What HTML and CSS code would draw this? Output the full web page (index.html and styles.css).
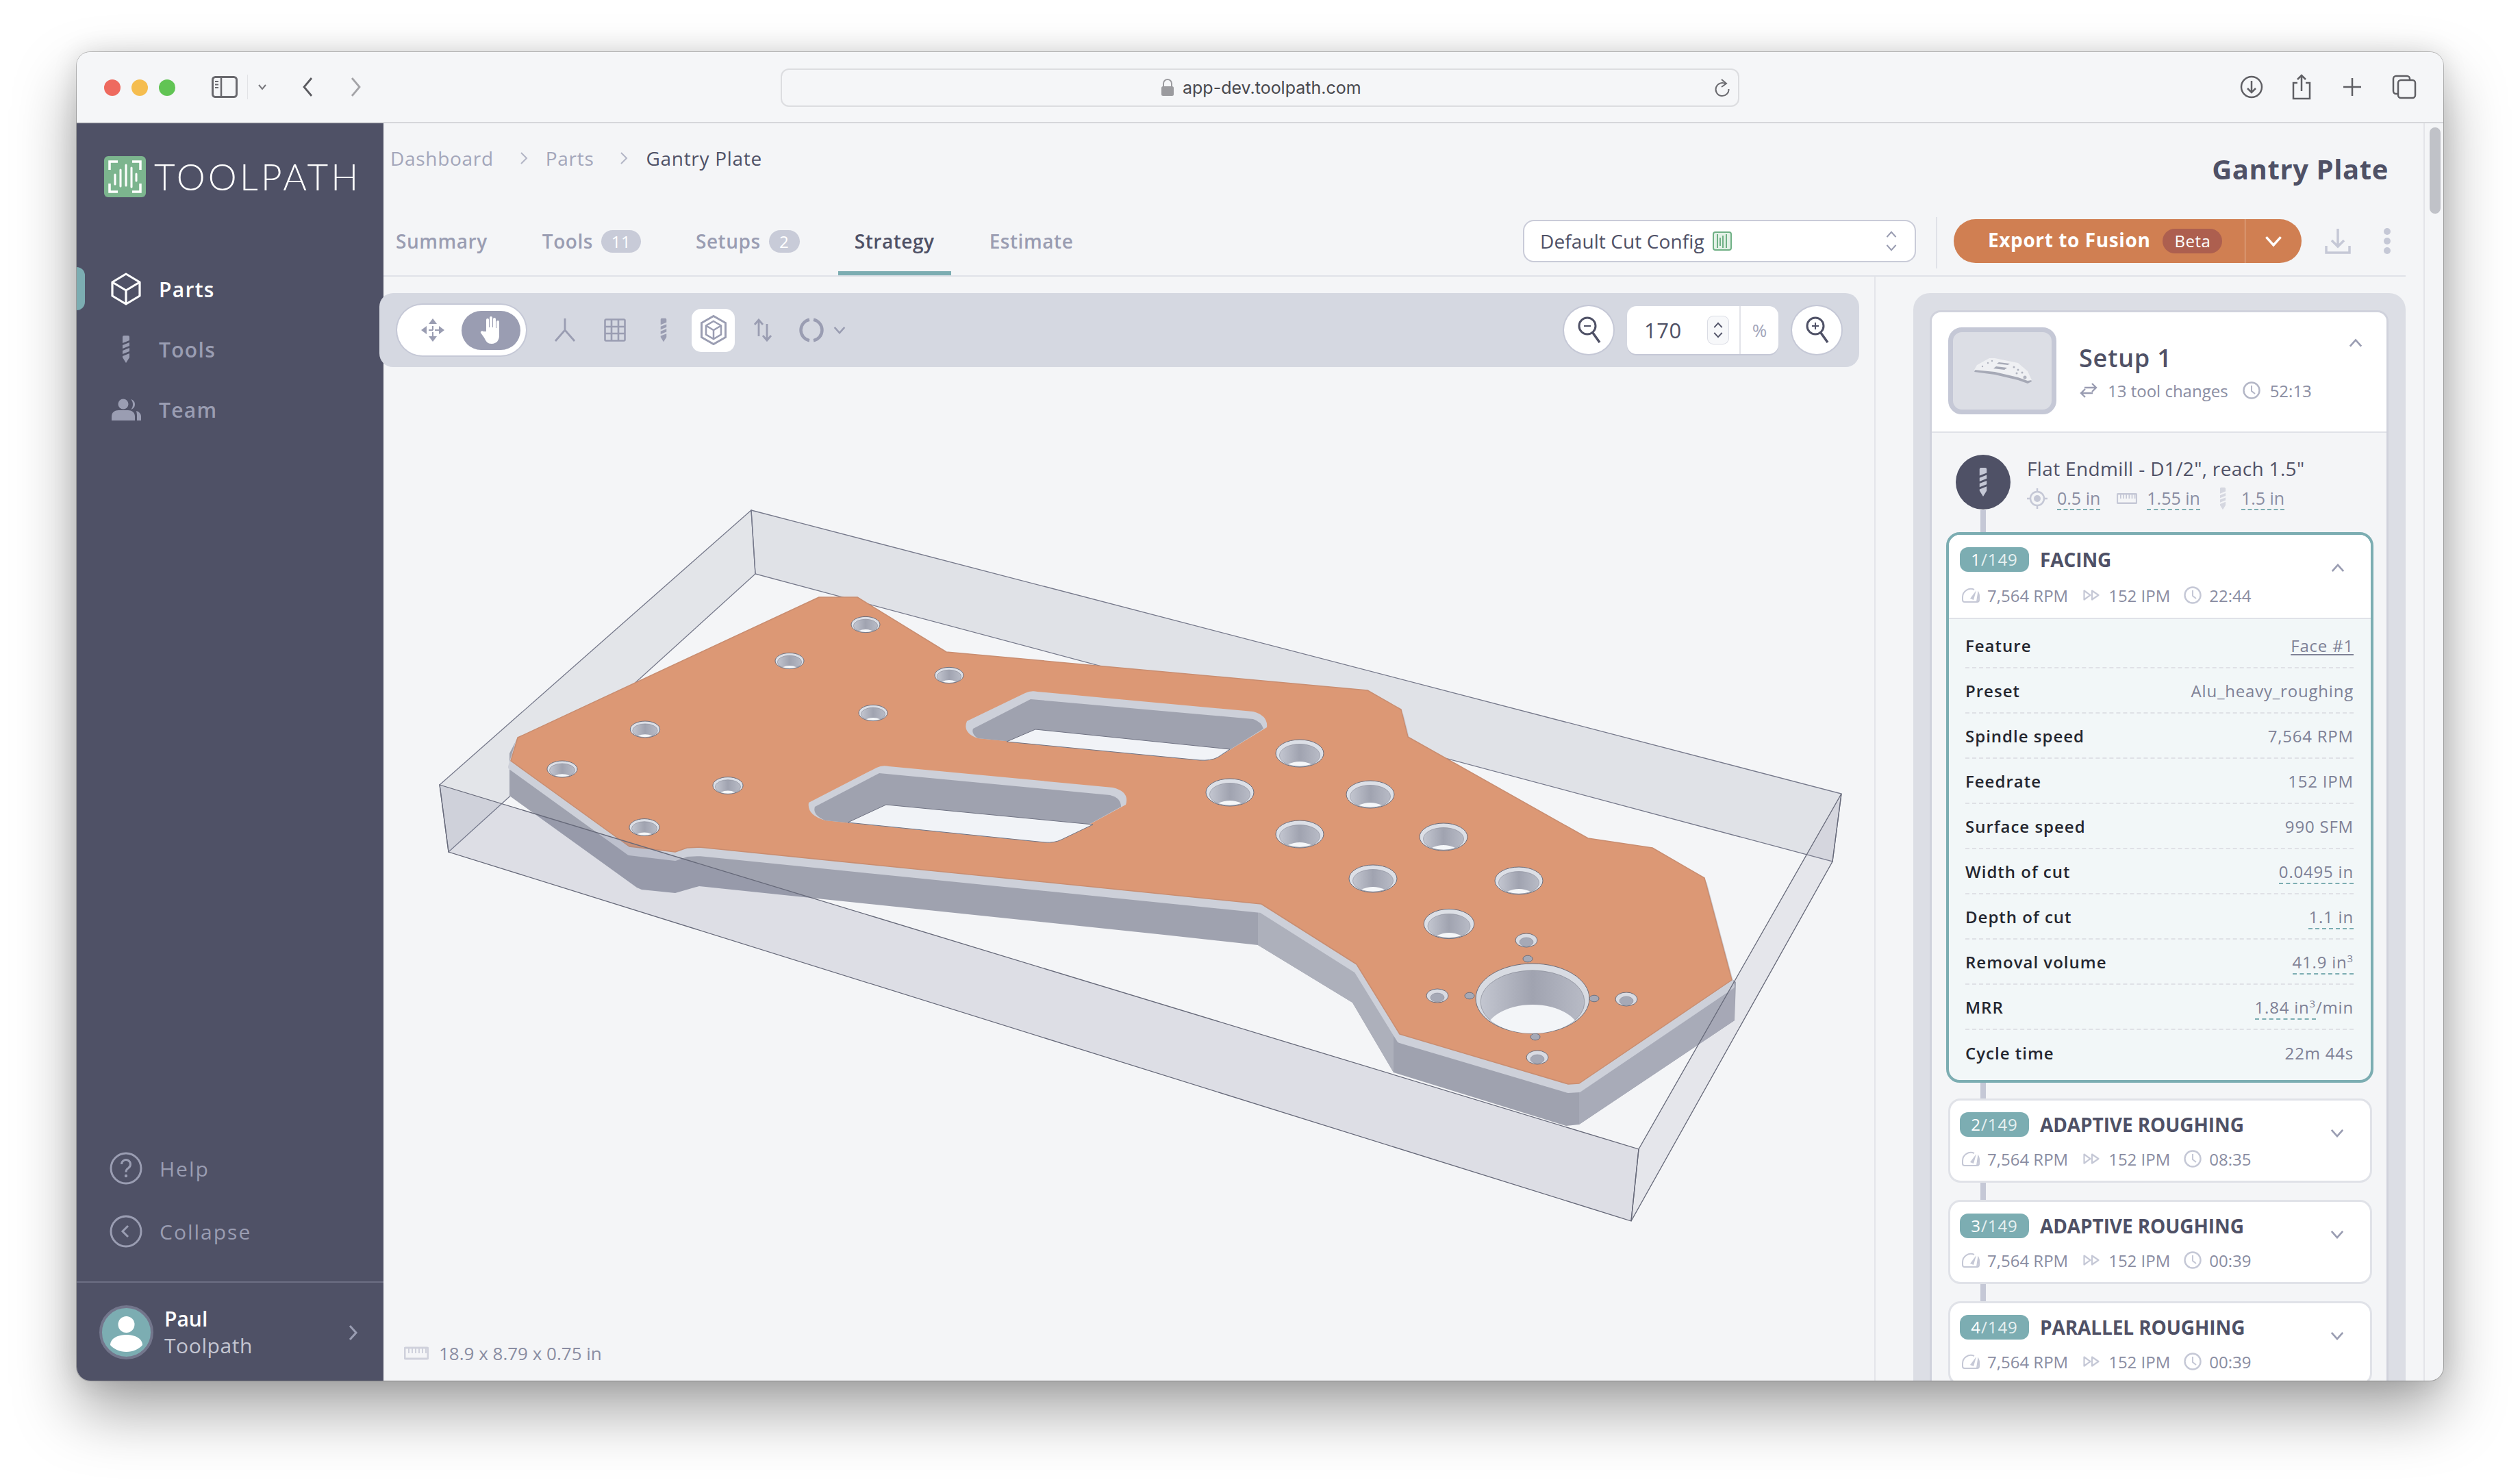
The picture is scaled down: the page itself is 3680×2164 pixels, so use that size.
FILE: index.html
```html
<!DOCTYPE html>
<html lang="en">
<head>
<meta charset="utf-8">
<title>Toolpath - Gantry Plate</title>
<link rel="stylesheet" href="styles.css">
</head>
<body>
<svg class="defs" width="0" height="0" aria-hidden="true">
  <defs>
    <symbol id="i-endmill" viewBox="0 0 12 42">
      <path d="M1 3a2 2 0 0 1 2-2h6a2 2 0 0 1 2 2v5L1 12zM1 15l10-4v5L1 20zM1 23l10-4v5L1 28zM1 31l10-4v6l-5 8-5-8z" fill="currentColor"/>
    </symbol>
    <symbol id="i-gauge" viewBox="0 0 26 24">
      <path d="M4 22a3 3 0 0 1-3-3v-4A12 12 0 0 1 18 4M24 9a12 12 0 0 1 1 6v4a3 3 0 0 1-3 3zM4 22h18" fill="none" stroke="currentColor" stroke-width="2"/>
      <path d="M12 17l9-12-4 14z" fill="currentColor"/>
    </symbol>
    <symbol id="i-ff" viewBox="0 0 24 16">
      <path d="M1.5 1.5l9 6.5-9 6.5zM13 1.5l9.500 6.500-9.500 6.500z" fill="none" stroke="currentColor" stroke-width="2.200" stroke-linejoin="round"/>
    </symbol>
    <symbol id="i-clock" viewBox="0 0 26 26">
      <circle cx="13" cy="13" r="11.500" fill="none" stroke="currentColor" stroke-width="2.400"/>
      <path d="M13 6v8l5 4" fill="none" stroke="currentColor" stroke-width="2"/>
    </symbol>
    <symbol id="i-down" viewBox="0 0 22 14">
      <path d="M2 2l9 10 9-10" fill="none" stroke="currentColor" stroke-width="3"/>
    </symbol>
    <symbol id="i-up" viewBox="0 0 22 14">
      <path d="M2 12l9-10 9 10" fill="none" stroke="currentColor" stroke-width="3"/>
    </symbol>
    <symbol id="i-ruler" viewBox="0 0 36 20">
      <path d="M2.500 2h31a1.500 1.500 0 0 1 1.500 1.500v13a1.500 1.500 0 0 1-1.500 1.500h-31A1.500 1.500 0 0 1 1 16.500v-13A1.500 1.500 0 0 1 2.500 2z" fill="none" stroke="currentColor" stroke-width="3"/>
      <path d="M7 2v8M12 2v8M17 2v8M22 2v8M27 2v8M32 2v8" stroke="currentColor" stroke-width="2"/>
    </symbol>
    <symbol id="i-logo" viewBox="0 0 61 60">
      <rect width="61" height="60" rx="6" fill="#7cb58e"/>
      <path d="M20 8H8v12M41 8h12v12M8 40v12h12M53 40v12H41" fill="none" stroke="#fff" stroke-width="3.500"/>
      <path d="M16 27v14M24 20v24M32 13v30M40 17v28M47 26v10" fill="none" stroke="#fff" stroke-width="3" stroke-linecap="round"/>
    </symbol>
    <linearGradient id="hole-wall" x1="0" x2="1" y1="0" y2="0">
      <stop offset="0" stop-color="#c3c6d0"/>
      <stop offset=".5" stop-color="#a0a3b0"/>
      <stop offset="1" stop-color="#b8bbc6"/>
    </linearGradient>
    <g id="hole">
      <ellipse rx="35" ry="20" fill="#dcdfe6" stroke="#6b6e7c" stroke-width="1" vector-effect="non-scaling-stroke"/>
      <ellipse cy="3" rx="29.500" ry="16.500" fill="url(#hole-wall)" stroke="#7c7f8c" stroke-width=".5" vector-effect="non-scaling-stroke"/>
      <path d="M-17 16Q0 8 17 16Q0 21.500-17 16z" fill="#f5f7f9"/>
    </g>
    <g id="hole-small">
      <ellipse rx="16" ry="10" fill="#d9dbe2" stroke="#6b6e7c" stroke-width="1"/>
      <ellipse cx="0" cy="2.500" rx="10" ry="6.500" fill="#a6a9b6" stroke="#7c7f8c" stroke-width=".5"/>
    </g>
    <g id="hole-tiny">
      <ellipse rx="7" ry="4.800" fill="#a6a9b6" stroke="#6b6e7c" stroke-width="1"/>
    </g>
    <clipPath id="bore"><ellipse cx="2238" cy="1463" rx="76" ry="46"/></clipPath>
  </defs>
</svg>

<div class="window">
  <header class="titlebar">
    <div class="traffic"><i class="dot dot-red"></i><i class="dot dot-yellow"></i><i class="dot dot-green"></i></div>
    <svg class="tb-sidebar" width="38" height="32" viewBox="0 0 38 32"><rect x="1.500" y="1.500" width="35" height="29" rx="4" fill="none" stroke="#69696e" stroke-width="3"/><path d="M14 2v28" stroke="#69696e" stroke-width="2.500"/><path d="M5 8h5M5 12.500h5M5 17h5" stroke="#69696e" stroke-width="2"/></svg>
    <i class="tb-sep"></i>
    <svg class="tb-caret" width="14" height="10" viewBox="0 0 14 10"><path d="M2 2l5 6 5-6" fill="none" stroke="#77777c" stroke-width="2"/></svg>
    <svg class="tb-back" width="16" height="30" viewBox="0 0 16 30"><path d="M14 2L3 15l11 13" fill="none" stroke="#5b5b60" stroke-width="2.800"/></svg>
    <svg class="tb-forward" width="16" height="30" viewBox="0 0 16 30"><path d="M2 2l11 13L2 28" fill="none" stroke="#a4a4a8" stroke-width="2.800"/></svg>
    <div class="address">
      <svg class="lock" width="20" height="26" viewBox="0 0 20 26"><path d="M4 12V7a6 6 0 0 1 12 0v5" fill="none" stroke="#9b9b9f" stroke-width="2"/><rect x="1" y="11" width="18" height="14" rx="2.500" fill="#9b9b9f"/></svg>
      <span class="url">app-dev.toolpath.com</span>
      <svg class="reload" width="24" height="28" viewBox="0 0 24 28"><path d="M17 8.500A9.500 9.500 0 1 0 21.500 16" fill="none" stroke="#6b6b70" stroke-width="2"/><path d="M11 2l7 6-7 5" fill="none" stroke="#6b6b70" stroke-width="2"/></svg>
    </div>
    <svg class="tb-dl" width="34" height="34" viewBox="0 0 34 34"><circle cx="17" cy="17" r="15" fill="none" stroke="#5f5f64" stroke-width="2.500"/><path d="M17 8v17M11 19l6 6 6-6" fill="none" stroke="#5f5f64" stroke-width="2.500"/></svg>
    <svg class="tb-share" width="30" height="38" viewBox="0 0 30 38"><path d="M9 13H3v23h24V13h-6" fill="none" stroke="#5f5f64" stroke-width="2.500"/><path d="M15 25V2M9 8l6-6 6 6" fill="none" stroke="#5f5f64" stroke-width="2.500"/></svg>
    <svg class="tb-plus" width="28" height="28" viewBox="0 0 28 28"><path d="M14 1v26M1 14h26" stroke="#5f5f64" stroke-width="2.500"/></svg>
    <svg class="tb-tabs" width="36" height="36" viewBox="0 0 36 36"><rect x="9" y="8" width="25" height="26" rx="4" fill="none" stroke="#5f5f64" stroke-width="2.500"/><path d="M9 28H6a4 4 0 0 1-4-4V6a4 4 0 0 1 4-4h16a4 4 0 0 1 4 4v2" fill="none" stroke="#5f5f64" stroke-width="2.500"/></svg>
  </header>

  <div class="main">
    <aside class="sidebar">
      <div class="brand">
        <svg class="brand-mark" width="61" height="60"><use href="#i-logo"/></svg>
        <span class="brand-name">TOOLPATH</span>
      </div>
      <nav class="nav">
        <a class="nav-item is-active">
          <span class="nav-icon"><svg width="44" height="48" viewBox="0 0 44 48"><path d="M22 2l20 12v20L22 46 2 34V14zM2 14l20 12 20-12M22 26v20" fill="none" stroke="currentColor" stroke-width="3.200" stroke-linejoin="round"/></svg></span>
          <span>Parts</span>
        </a>
        <a class="nav-item">
          <span class="nav-icon"><svg width="12" height="42"><use href="#i-endmill"/></svg></span>
          <span>Tools</span>
        </a>
        <a class="nav-item">
          <span class="nav-icon"><svg width="44" height="32" viewBox="0 0 44 32"><circle cx="18" cy="8" r="7.500" fill="currentColor"/><path d="M1 32v-6c0-6 5-9 10-9h14c5 0 10 3 10 9v6z" fill="currentColor"/><path d="M29 1c4 1 6 4 6 7.500S33 15 29 16c2-2 3-4.500 3-7.500S31 3 29 1zM37 18c4 1 7 4 7 8v6h-6v-7c0-3-.5-5-1-7z" fill="currentColor"/></svg></span>
          <span>Team</span>
        </a>
      </nav>
      <div class="nav-bottom">
        <a class="nav-item nav-item-light">
          <span class="nav-icon"><svg width="48" height="48" viewBox="0 0 48 48"><circle cx="24" cy="24" r="22" fill="none" stroke="currentColor" stroke-width="3"/><path d="M17.500 18a6.500 6.500 0 1 1 10 5.500c-2.500 1.500-3.500 3-3.500 6" fill="none" stroke="currentColor" stroke-width="3"/><circle cx="24" cy="35" r="2.200" fill="currentColor"/></svg></span>
          <span>Help</span>
        </a>
        <a class="nav-item nav-item-light">
          <span class="nav-icon"><svg width="48" height="48" viewBox="0 0 48 48"><circle cx="24" cy="24" r="22" fill="none" stroke="currentColor" stroke-width="3"/><path d="M27 16l-8 8 8 8" fill="none" stroke="currentColor" stroke-width="3"/></svg></span>
          <span>Collapse</span>
        </a>
      </div>
      <div class="user">
        <svg class="avatar" width="79" height="79" viewBox="0 0 79 79"><circle cx="39.500" cy="39.500" r="37.500" fill="#7cadb2" stroke="#73768c" stroke-width="4"/><ellipse cx="39.500" cy="28" rx="12" ry="12" fill="#fff"/><path d="M16 58c0-10 12-15 23.500-15S63 48 63 58c-5 6-14 10-23.500 10S21 64 16 58z" fill="#fff"/></svg>
        <div class="user-text"><b>Paul</b><span>Toolpath</span></div>
        <svg class="user-chev" width="16" height="24" viewBox="0 0 16 24"><path d="M3 2l9 10-9 10" fill="none" stroke="#9a9db2" stroke-width="3"/></svg>
      </div>
    </aside>

    <section class="content">
      <div class="page">
        <div class="page-head">
          <div class="crumbs">
            <span class="crumb">Dashboard</span>
            <svg class="crumb-sep" width="12" height="20" viewBox="0 0 12 20"><path d="M2 2l8 8-8 8" fill="none" stroke="#b3b6c6" stroke-width="2"/></svg>
            <span class="crumb">Parts</span>
            <svg class="crumb-sep" width="12" height="20" viewBox="0 0 12 20"><path d="M2 2l8 8-8 8" fill="none" stroke="#b3b6c6" stroke-width="2"/></svg>
            <span class="crumb crumb-current">Gantry Plate</span>
          </div>
          <h1 class="page-title">Gantry Plate</h1>
        </div>

        <div class="tabbar">
          <div class="tabs">
            <a class="tab">Summary</a>
            <a class="tab">Tools <i class="count count-wide">11</i></a>
            <a class="tab">Setups <i class="count">2</i></a>
            <a class="tab is-active">Strategy</a>
            <a class="tab">Estimate</a>
          </div>
          <div class="actions">
            <div class="select">
              <span>Default Cut Config</span>
              <svg class="select-logo" width="28" height="28" viewBox="0 0 28 28"><rect x="1" y="1" width="26" height="26" rx="3" fill="#e3f1e7" stroke="#6fb085" stroke-width="2"/><path d="M7 4v20M11 9v12M15 6v18M20 4v20" stroke="#6fb085" stroke-width="2"/></svg>
              <span class="updown"><svg width="16" height="11"><use href="#i-up"/></svg><svg width="16" height="11"><use href="#i-down"/></svg></span>
            </div>
            <i class="act-sep"></i>
            <div class="export">
              <span class="export-main">Export to Fusion<i class="beta">Beta</i></span>
              <span class="export-caret"><svg width="26" height="18"><use href="#i-down"/></svg></span>
            </div>
            <svg class="act-dl" width="38" height="38" viewBox="0 0 38 38"><path d="M19 1v26M10 18l9 9 9-9" fill="none" stroke="#c5c8d6" stroke-width="3.500"/><path d="M2 26v10h34V26" fill="none" stroke="#c5c8d6" stroke-width="3.500"/></svg>
            <span class="act-more"><i></i><i></i><i></i></span>
          </div>
        </div>

        <div class="work">
          <div class="viewer">
            <svg class="scene" width="2180" height="1480" viewBox="560 536 2180 1480">
              <polygon points="1097,745 2689,1159 2676,1258 1103,838" fill="#e0e2e7"/>
              <polygon points="1097,745 642,1146 655,1244 1103,838" fill="#e3e5e9"/>
              <g fill="none" stroke="#75788a" stroke-width="1.300">
                <polygon points="1097,745 2689,1159 2676,1258 1103,838"/>
                <polygon points="1097,745 642,1146 655,1244 1103,838"/>
              </g>
              <polygon points="744,1100 744,1162 930,1296 937,1299 986,1304 1021,1294 1700,1365 1837,1380 1975,1464 2035,1566 2287,1644 2306,1642 2533,1490 2535,1434 2056,1076 756,1077" fill="#9fa2af"/>
              <polygon points="1837,1320 1975,1405 2035,1510 2035,1566 1975,1464 1837,1380" fill="#adb0bb"/>
              <polygon points="2306,1590 2533,1434 2533,1490 2306,1642" fill="#a8abb8"/>
              <polygon points="1196,872 1252,872 1382,952 1997,1008 2046,1036 2056,1076 2319,1224 2413,1238 2489,1282 2529,1431 2306,1582 2290,1583 2044,1510 1981,1408 1842,1320 1021,1237 1003,1238 986,1244 919,1236 746,1111 756,1077" fill="#cdd0d9" stroke="#cdd0d9" stroke-width="8" stroke-linejoin="round" transform="translate(0 9)"/>
              <polygon points="1196,872 1252,872 1382,952 1997,1008 2046,1036 2056,1076 2319,1224 2413,1238 2489,1282 2529,1431 2306,1582 2290,1583 2044,1510 1981,1408 1842,1320 1021,1237 1003,1238 986,1244 919,1236 746,1111 756,1077" fill="#dc9875" stroke="#c98d70" stroke-width="1.500" stroke-linejoin="round"/>

              <path d="M1497 1012Q1505 1008 1515 1010L1830 1039Q1852 1045 1850 1062L1778 1106Q1768 1111 1752 1110L1428 1078Q1405 1070 1412 1053Z" fill="#cdd0d9"/>
              <path d="M1505 1021L1830 1050Q1842 1054 1845 1064L1778 1106L1752 1110L1428 1078Q1418 1072 1421 1064Z" fill="#9fa2af"/>
              <path d="M1470 1083L1512 1065L1796 1094L1778 1106Q1768 1111 1752 1110Z" fill="#f1f3f7" stroke="#6f7282" stroke-width="1"/>
              <path d="M1280 1121Q1288 1117 1298 1119L1625 1150Q1650 1156 1644 1175L1550 1226Q1540 1231 1526 1230L1205 1198Q1178 1190 1181 1172Z" fill="#cdd0d9"/>
              <path d="M1284 1129L1621 1161Q1637 1165 1637 1178L1550 1226L1526 1230L1205 1198Q1186 1190 1190 1178Z" fill="#9fa2af"/>
              <path d="M1238 1201L1294 1175L1596 1204L1550 1226Q1540 1231 1526 1230Z" fill="#f1f3f7" stroke="#6f7282" stroke-width="1"/>

              <use href="#hole" transform="translate(1264 912) scale(.6 .58)"/>
              <use href="#hole" transform="translate(1153 965) scale(.6 .58)"/>
              <use href="#hole" transform="translate(1386 986) scale(.6 .58)"/>
              <use href="#hole" transform="translate(1275 1041) scale(.6 .58)"/>
              <use href="#hole" transform="translate(942 1065) scale(.62 .6)"/>
              <use href="#hole" transform="translate(821 1123) scale(.63 .6)"/>
              <use href="#hole" transform="translate(1063 1147) scale(.63 .62)"/>
              <use href="#hole" transform="translate(941 1208) scale(.63 .62)"/>
              <use href="#hole" transform="translate(1898 1100)"/>
              <use href="#hole" transform="translate(1796 1157)"/>
              <use href="#hole" transform="translate(2001 1160)"/>
              <use href="#hole" transform="translate(1898 1218)"/>
              <use href="#hole" transform="translate(2108 1222)"/>
              <use href="#hole" transform="translate(2005 1283)"/>
              <use href="#hole" transform="translate(2218 1286)"/>
              <use href="#hole" transform="translate(2116 1349) scale(1.05 1.08)"/>
              <use href="#hole-small" transform="translate(2229 1373)"/>
              <use href="#hole-small" transform="translate(2099 1454)"/>
              <use href="#hole-small" transform="translate(2375 1459)"/>
              <use href="#hole-small" transform="translate(2245 1544)"/>
              <use href="#hole-tiny" transform="translate(2231 1400)"/>
              <use href="#hole-tiny" transform="translate(2146 1454)"/>
              <use href="#hole-tiny" transform="translate(2328 1458)"/>
              <use href="#hole-tiny" transform="translate(2242 1514)"/>
              <ellipse cx="2238" cy="1458" rx="83" ry="51" fill="#d8dbe2" stroke="#6b6e7c" stroke-width="1"/>
              <ellipse cx="2238" cy="1463" rx="76" ry="46" fill="url(#hole-wall)" stroke="#7c7f8c" stroke-width=".6"/>
              <ellipse cx="2238" cy="1510" rx="70" ry="43" fill="#f3f5f8" clip-path="url(#bore)"/>

              <polygon points="642,1146 2393,1678 2382,1783 655,1244" fill="#777b93" fill-opacity=".18"/>
              <polygon points="2689,1159 2393,1678 2382,1783 2676,1258" fill="#9a9eb0" fill-opacity=".16"/>
              <g fill="none" stroke="#666979" stroke-width="1.300">
                <polygon points="642,1146 2393,1678 2382,1783 655,1244"/>
                <polygon points="2689,1159 2393,1678 2382,1783 2676,1258"/>
              </g>
            </svg>

            <div class="viewbar">
              <div class="mode-toggle">
                <svg class="mode-move" width="34" height="34" viewBox="0 0 34 34"><path d="M17 2v30M2 17h30" stroke="#9a9db2" stroke-width="2" stroke-dasharray="6 3"/><path d="M17 0l6 8H11zM17 34l-6-8h12zM0 17l8-6v12zM34 17l-8 6V11z" fill="#9a9db2"/></svg>
                <span class="mode-hand"><svg width="32" height="42" viewBox="0 0 32 42"><path d="M9 23V6a2 2 0 0 1 4 0v11h1V3a2 2 0 0 1 4 0v14h1V5a2 2 0 0 1 4 0v13h1V9a2 2 0 0 1 4 0v20c0 7-4 12-11 12-6 0-8-3-11-9l-5-7c-1-2 2-4 4-2z" fill="#fff"/></svg></span>
              </div>
              <svg class="vb-axis" width="32" height="34" viewBox="0 0 32 34"><path d="M16 0v17L2 33M16 17l14 16" fill="none" stroke="#9a9db2" stroke-width="2.800"/></svg>
              <svg class="vb-grid" width="32" height="34" viewBox="0 0 32 34"><path d="M3 1.500h26A1.500 1.500 0 0 1 30.500 3v28a1.500 1.500 0 0 1-1.500 1.500H3A1.500 1.500 0 0 1 1.500 31V3A1.500 1.500 0 0 1 3 1.500zM11 2v30M21 2v30M2 12h28M2 22h28" fill="none" stroke="#9a9db2" stroke-width="2.600"/></svg>
              <svg class="vb-tool" width="12" height="36" color="#9a9db2"><use href="#i-endmill"/></svg>
              <span class="vb-active"><svg width="40" height="44" viewBox="0 0 40 44"><path d="M20 1.500l17.500 10v21L20 42.500l-17.500-10v-21z" fill="none" stroke="#9a9db2" stroke-width="3"/><path d="M20 9l11 6.500v13L20 35 9 28.500v-13zM9 15.500L20 22l11-6.500M20 22v13" fill="none" stroke="#9a9db2" stroke-width="2.500"/></svg></span>
              <svg class="vb-swap" width="30" height="34" viewBox="0 0 30 34"><path d="M9 26V2M3 9l6-7 6 7M21 8v24M15 25l6 7 6-7" fill="none" stroke="#9a9db2" stroke-width="2.800"/></svg>
              <svg class="vb-orbit" width="36" height="36" viewBox="0 0 36 36"><path d="M15 2.800A15.500 15.500 0 0 0 15 33.200M21 2.800a15.500 15.500 0 0 1 0 30.400" fill="none" stroke="#9a9db2" stroke-width="4.500"/></svg>
              <svg class="vb-caret" width="18" height="12"><use href="#i-down" color="#9a9db2"/></svg>
              <span class="zoom-btn zoom-minus"><svg width="36" height="42" viewBox="0 0 36 42"><circle cx="15" cy="15" r="12" fill="none" stroke="#4f5166" stroke-width="3"/><path d="M10 15h10" stroke="#4f5166" stroke-width="2"/><path d="M23 25l10 14" stroke="#4f5166" stroke-width="3.500"/></svg></span>
              <div class="zoom-field">
                <span class="zoom-value">170</span>
                <span class="zoom-spin"><svg width="14" height="10"><use href="#i-up" color="#4f5166"/></svg><svg width="14" height="10"><use href="#i-down" color="#4f5166"/></svg></span>
                <span class="zoom-unit">%</span>
              </div>
              <span class="zoom-btn"><svg width="36" height="42" viewBox="0 0 36 42"><circle cx="15" cy="15" r="12" fill="none" stroke="#4f5166" stroke-width="3"/><path d="M10 15h10M15 10v10" stroke="#4f5166" stroke-width="2"/><path d="M23 25l10 14" stroke="#4f5166" stroke-width="3.500"/></svg></span>
            </div>

            <div class="dims">
              <svg width="36" height="20" color="#cfd1dc"><use href="#i-ruler"/></svg>
              <span>18.9 x 8.79 x 0.75 in</span>
            </div>
          </div>

          <aside class="panel">
            <div class="panel-inner">
              <div class="setup-card">
                <div class="setup-head">
                  <div class="thumb">
                    <svg width="90" height="38" viewBox="0 0 90 38"><path d="M8 13L26 1h8l34 8 14 12 6 13-6 3-14-5-34-8L4 20z" fill="#a6a9b6"/><path d="M8 10L26 0h8l34 7 14 12 6 13-6 1-14-5-34-8L4 17z" fill="#eff0f3"/><path d="M36 12l16 2-4 3-16-2zM40 6l16 2-3 2-16-2z" fill="#a6a9b6"/><g fill="#b1b4c0"><circle cx="16" cy="12" r="1.200"/><circle cx="24" cy="7" r="1.200"/><circle cx="30" cy="4" r="1.200"/><circle cx="62" cy="13" r="1.500"/><circle cx="68" cy="17" r="1.500"/><circle cx="74" cy="21" r="1.500"/><circle cx="66" cy="22" r="1.500"/><circle cx="78" cy="28" r="2.500"/></g></svg>
                  </div>
                  <div class="setup-text">
                    <h2>Setup 1</h2>
                    <div class="setup-meta">
                      <svg width="28" height="30" viewBox="0 0 28 30"><path d="M4 19h16M9 13l-6 6 6 6M24 11H8M19 5l6 6-6 6" fill="none" stroke="#9a9db2" stroke-width="2.400"/></svg>
                      <span>13 tool changes</span>
                      <svg class="m-clock" width="26" height="26" color="#b3b6c6"><use href="#i-clock"/></svg>
                      <span>52:13</span>
                    </div>
                  </div>
                  <svg class="setup-chev" width="20" height="14" color="#9a9db2"><use href="#i-up"/></svg>
                </div>

                <div class="setup-body">
                  <div class="tool">
                    <span class="tool-disc"><svg width="14" height="44" color="#c5c8d6"><use href="#i-endmill"/></svg></span>
                    <div class="tool-text">
                      <div class="tool-name">Flat Endmill - D1/2", reach 1.5"</div>
                      <div class="tool-specs">
                        <svg width="30" height="30" viewBox="0 0 30 30"><circle cx="15" cy="15" r="10" fill="none" stroke="#c5c8d6" stroke-width="2.500"/><circle cx="15" cy="15" r="5" fill="#c5c8d6"/><path d="M15 0v5M15 25v5M0 15h5M25 15h5" stroke="#c5c8d6" stroke-width="2.500"/></svg>
                        <span class="dotted">0.5 in</span>
                        <svg class="spec-icon" width="30" height="18" color="#c5c8d6"><use href="#i-ruler"/></svg>
                        <span class="dotted">1.55 in</span>
                        <svg class="spec-icon spec-tool" width="10" height="34" color="#d5d7e0"><use href="#i-endmill"/></svg>
                        <span class="dotted spec-last">1.5 in</span>
                      </div>
                    </div>
                  </div>
                  <i class="link link-first"></i>

                  <article class="step is-open">
                    <div class="step-head">
                      <div class="step-main">
                        <div class="step-title"><span class="pill"><b>1</b>/149</span><strong>FACING</strong></div>
                        <div class="step-meta">
                          <svg width="26" height="24"><use href="#i-gauge"/></svg><span class="rpm">7,564 RPM</span>
                          <svg width="24" height="16"><use href="#i-ff"/></svg><span class="ipm">152 IPM</span>
                          <svg width="26" height="26"><use href="#i-clock"/></svg><span>22:44</span>
                        </div>
                      </div>
                      <svg class="step-chev" width="20" height="13"><use href="#i-up"/></svg>
                    </div>
                    <dl class="props">
                      <div class="prop"><dt>Feature</dt><dd><u>Face #1</u></dd></div>
                      <div class="prop"><dt>Preset</dt><dd>Alu_heavy_roughing</dd></div>
                      <div class="prop"><dt>Spindle speed</dt><dd>7,564 RPM</dd></div>
                      <div class="prop"><dt>Feedrate</dt><dd>152 IPM</dd></div>
                      <div class="prop"><dt>Surface speed</dt><dd>990 SFM</dd></div>
                      <div class="prop"><dt>Width of cut</dt><dd><span class="dotted">0.0495 in</span></dd></div>
                      <div class="prop"><dt>Depth of cut</dt><dd><span class="dotted">1.1 in</span></dd></div>
                      <div class="prop"><dt>Removal volume</dt><dd><span class="dotted">41.9 in<sup>3</sup></span></dd></div>
                      <div class="prop"><dt>MRR</dt><dd><span class="dotted">1.84 in<sup>3</sup></span>/min</dd></div>
                      <div class="prop prop-last"><dt>Cycle time</dt><dd>22m 44s</dd></div>
                    </dl>
                  </article>
                  <i class="link link-open"></i>

                  <article class="step">
                    <div class="step-head">
                      <div class="step-main">
                        <div class="step-title"><span class="pill"><b>2</b>/149</span><strong>ADAPTIVE ROUGHING</strong></div>
                        <div class="step-meta">
                          <svg width="26" height="24"><use href="#i-gauge"/></svg><span class="rpm">7,564 RPM</span>
                          <svg width="24" height="16"><use href="#i-ff"/></svg><span class="ipm">152 IPM</span>
                          <svg width="26" height="26"><use href="#i-clock"/></svg><span>08:35</span>
                        </div>
                      </div>
                      <svg class="step-chev" width="20" height="13"><use href="#i-down"/></svg>
                    </div>
                  </article>
                  <i class="link"></i>

                  <article class="step">
                    <div class="step-head">
                      <div class="step-main">
                        <div class="step-title"><span class="pill"><b>3</b>/149</span><strong>ADAPTIVE ROUGHING</strong></div>
                        <div class="step-meta">
                          <svg width="26" height="24"><use href="#i-gauge"/></svg><span class="rpm">7,564 RPM</span>
                          <svg width="24" height="16"><use href="#i-ff"/></svg><span class="ipm">152 IPM</span>
                          <svg width="26" height="26"><use href="#i-clock"/></svg><span>00:39</span>
                        </div>
                      </div>
                      <svg class="step-chev" width="20" height="13"><use href="#i-down"/></svg>
                    </div>
                  </article>
                  <i class="link"></i>

                  <article class="step">
                    <div class="step-head">
                      <div class="step-main">
                        <div class="step-title"><span class="pill"><b>4</b>/149</span><strong>PARALLEL ROUGHING</strong></div>
                        <div class="step-meta">
                          <svg width="26" height="24"><use href="#i-gauge"/></svg><span class="rpm">7,564 RPM</span>
                          <svg width="24" height="16"><use href="#i-ff"/></svg><span class="ipm">152 IPM</span>
                          <svg width="26" height="26"><use href="#i-clock"/></svg><span>00:39</span>
                        </div>
                      </div>
                      <svg class="step-chev" width="20" height="13"><use href="#i-down"/></svg>
                    </div>
                  </article>
                </div>
              </div>
            </div>
          </aside>
        </div>
      </div>
      <div class="scrollbar"><i></i></div>
    </section>
  </div>
</div>
</body>
</html>
```

FILE: styles.css
```css
* { box-sizing: border-box; }
html, body { height: 100%; }
body {
  margin: 0;
  padding: 76px 112px 0;
  background: #fff;
  overflow: hidden;
  font-family: "Open Sans", "Liberation Sans", sans-serif;
  color: #4f5166;
}
i { font-style: normal; display: block; }
h1, h2, dl, dd { margin: 0; }
svg { display: block; flex: none; }
.defs { position: absolute; }

.window {
  width: 3456px;
  height: 1940px;
  border-radius: 20px;
  overflow: hidden;
  display: flex;
  flex-direction: column;
  background: #f4f5f7;
  box-shadow: 0 44px 90px rgba(0, 0, 0, .36), 0 0 36px rgba(0, 0, 0, .12), 0 0 0 1px rgba(0, 0, 0, .22);
}

/* browser chrome */
.titlebar {
  flex: none;
  height: 104px;
  display: flex;
  align-items: center;
  padding-left: 40px;
  background: #f5f6f8;
  border-bottom: 2px solid #d6d7da;
}
.traffic { display: flex; gap: 16px; margin-top: 2px; }
.dot { width: 24px; height: 24px; border-radius: 50%; }
.dot-red { background: #ee6a5f; }
.dot-yellow { background: #f5bd4f; }
.dot-green { background: #61c454; }
.tb-sidebar { margin-left: 53px; }
.tb-sep { width: 1px; height: 36px; margin-left: 14px; background: #e2e3e6; }
.tb-caret { margin-left: 14px; }
.tb-back { margin-left: 51px; }
.tb-forward { margin-left: 55px; }
.address {
  width: 1400px;
  height: 56px;
  margin: 2px 0 0 612px;
  padding-left: 553px;
  display: flex;
  align-items: center;
  border: 2px solid #dcdde0;
  border-radius: 12px;
  background: #f5f6f8;
  position: relative;
}
.url {
  margin-left: 12px;
  font-family: "Inter", "Liberation Sans", sans-serif;
  font-size: 25px;
  color: #48484d;
}
.reload { margin-left: auto; margin-right: 11px; }
.tb-dl { margin-left: 731px; }
.tb-share { margin-left: 41px; }
.tb-plus { margin-left: 45px; }
.tb-tabs { margin-left: 44px; }

.main { flex: 1; min-height: 0; display: flex; }

/* sidebar */
.sidebar {
  flex: none;
  width: 448px;
  display: flex;
  flex-direction: column;
  background: #4f5166;
  color: #9a9db2;
}
.brand { display: flex; align-items: center; gap: 12px; padding: 48px 0 0 40px; }
.brand-name {
  font-family: "Lato", "Liberation Sans", sans-serif;
  font-weight: 300;
  font-size: 53px;
  line-height: 60px;
  color: #fff;
  letter-spacing: 4.200px;
}
.nav { margin-top: 90px; }
.nav-item {
  position: relative;
  height: 88px;
  display: flex;
  align-items: center;
  gap: 26px;
  padding-left: 50px;
  font-size: 30px;
  font-weight: 600;
  letter-spacing: 1.300px;
}
.nav-icon { width: 44px; display: flex; justify-content: center; }
.nav-item.is-active { color: #fff; }
.nav-item.is-active::before {
  content: "";
  position: absolute;
  left: 0;
  top: 12px;
  width: 12px;
  height: 63px;
  border-radius: 0 12px 12px 0;
  background: #7cadb2;
}
.nav-bottom { margin-top: auto; margin-bottom: 27px; }
.nav-item-light { height: 92px; padding-left: 48px; gap: 25px; font-weight: 400; letter-spacing: 2px; }
.nav-item-light .nav-icon { width: 48px; }
.user {
  height: 145px;
  display: flex;
  align-items: flex-start;
  padding: 33px 0 0 33px;
  border-top: 2px solid #6c6e83;
}
.user-text { margin-left: 16px; display: flex; flex-direction: column; font-size: 30px; line-height: 39px; margin-top: 0; }
.user-text b { color: #fff; font-weight: 600; }
.user-text span { color: #c4c6d2; letter-spacing: .6px; }
.user-chev { margin: 28px 36px 0 auto; }

/* content */
.content { flex: 1; min-width: 0; display: flex; }
.page { flex: 1; min-width: 0; display: flex; flex-direction: column; }
.scrollbar { flex: none; width: 29px; padding: 6px 0 0 7px; border-left: 2px solid #e4e5e9; }
.scrollbar i { width: 16px; height: 126px; border-radius: 8px; background: #c0c2c8; }

.page-head {
  flex: none;
  height: 140px;
  display: flex;
  justify-content: space-between;
  padding: 31px 51px 0 10px;
}
.crumbs { display: flex; align-items: center; height: 40px; font-size: 28px; letter-spacing: .7px; color: #a3a6ba; }
.crumb-sep { margin: 0 26px 0 38px; }
.crumb-current { color: #4f5166; }
.page-title { font-size: 40px; font-weight: 700; line-height: 54px; letter-spacing: .6px; margin-top: 9px; color: #4f5166; }

.tabbar {
  flex: none;
  height: 84px;
  margin-right: 26px;
  display: flex;
  justify-content: space-between;
  border-bottom: 2px solid #e0e2e8;
}
.tabs { display: flex; gap: 32px; margin-left: -6px; }
.tab {
  height: 82px;
  padding: 0 24px 12px;
  display: flex;
  align-items: center;
  gap: 12px;
  font-size: 28px;
  font-weight: 600;
  letter-spacing: .55px;
  color: #9a9db2;
  border-bottom: 6px solid transparent;
}
.tab.is-active { color: #4f5166; border-bottom-color: #7cadb2; }
.count {
  min-width: 45px;
  height: 33px;
  padding: 0 10px;
  border-radius: 17px;
  background: #c8cbd8;
  color: #fff;
  font-size: 24px;
  font-weight: 400;
  line-height: 33px;
  text-align: center;
}
.count-wide { min-width: 58px; }

.actions { display: flex; align-items: flex-start; padding-right: 22px; }
.select {
  width: 574px;
  height: 62px;
  margin-top: 1px;
  padding-left: 23px;
  display: flex;
  align-items: center;
  background: #fff;
  border: 2px solid #c9cbd8;
  border-radius: 16px;
  font-size: 28px;
  letter-spacing: .1px;
  color: #4f5166;
}
.select-logo { margin-left: 12px; }
.updown { margin-left: auto; margin-right: 26px; display: flex; flex-direction: column; gap: 8px; color: #9a9db2; }
.act-sep { width: 2px; height: 75px; margin: -3px 24px 0 29px; background: #e0e2e8; }
.export {
  width: 508px;
  height: 64px;
  display: flex;
  align-items: stretch;
  border-radius: 32px;
  background: #d07f52;
  color: #fff;
}
.export-main {
  width: 426px;
  padding: 0 0 5px 50px;
  display: flex;
  align-items: center;
  gap: 18px;
  border-right: 1px solid #e6b89c;
  font-size: 28px;
  font-weight: 700;
  letter-spacing: .6px;
}
.beta {
  width: 87px;
  height: 36px;
  margin-top: 5px;
  border-radius: 18px;
  background: #ad5f4f;
  font-size: 24px;
  font-weight: 400;
  letter-spacing: .5px;
  line-height: 36px;
  text-align: center;
}
.export-caret { flex: 1; display: flex; align-items: center; justify-content: center; }
.act-dl { margin: 13px 48px 0 34px; }
.act-more { display: flex; flex-direction: column; gap: 4px; margin-top: 13px; }
.act-more i { width: 10px; height: 10px; border-radius: 50%; background: #c5c8d6; }

.work { flex: 1; min-height: 0; display: flex; margin-right: 26px; }

/* viewer */
.viewer {
  position: relative;
  flex: none;
  width: 2179px;
  display: flex;
  flex-direction: column;
  padding-top: 24px;
  border-right: 2px solid #e4e5ea;
}
.scene { position: absolute; left: 0; top: 132px; }
.viewbar {
  position: relative;
  flex: none;
  height: 108px;
  margin: 0 22px 0 -6px;
  padding: 0 26px;
  display: flex;
  align-items: center;
  border-radius: 20px;
  background: #d5d8e1;
}
.mode-toggle {
  width: 188px;
  height: 74px;
  padding-right: 8px;
  display: flex;
  align-items: center;
  justify-content: space-between;
  padding-left: 35px;
  border-radius: 37px;
  background: #fff;
  box-shadow: 0 0 0 2px #c5c8d6;
}
.mode-hand { width: 86px; height: 57px; border-radius: 29px; background: #9a9db2; display: flex; align-items: center; justify-content: center; }
.vb-axis { margin-left: 41px; }
.vb-grid { margin-left: 41px; }
.vb-tool { margin: 0 10px 0 49px; }
.vb-active { width: 63px; height: 63px; margin-left: 25px; border-radius: 14px; background: #fff; display: flex; align-items: center; justify-content: center; }
.vb-swap { margin-left: 26px; }
.vb-orbit { margin-left: 38px; }
.vb-caret { margin-left: 14px; }
.zoom-btn {
  width: 72px;
  height: 70px;
  border-radius: 50%;
  background: #fff;
  box-shadow: 0 0 0 2px #c5c8d6;
  display: flex;
  align-items: center;
  justify-content: center;
  padding-left: 2px;
}
.zoom-minus { margin-left: auto; }
.zoom-field {
  width: 221px;
  height: 70px;
  margin: 0 20px;
  display: flex;
  align-items: center;
  border-radius: 14px;
  background: #fff;
  box-shadow: 0 2px 0 #c5c8d6;
}
.zoom-value { width: 118px; padding-left: 25px; font-size: 31px; letter-spacing: .5px; }
.zoom-spin { width: 30px; height: 40px; display: flex; flex-direction: column; align-items: center; justify-content: center; gap: 4px; border-radius: 8px; background: #f7f8fa; box-shadow: 0 0 0 1px #dadce4; }
.zoom-unit { flex: 1; height: 100%; margin-left: 16px; border-left: 2px solid #e2e3e9; color: #a3a6ba; font-size: 26px; display: flex; align-items: center; justify-content: center; }
.dims {
  position: relative;
  margin-top: auto;
  height: 40px;
  margin-bottom: 20px;
  padding-left: 30px;
  display: flex;
  align-items: center;
  gap: 15px;
  font-size: 26px;
  color: #8a8da2;
}

/* right panel */
.panel { flex: 1; min-width: 0; padding: 24px 0 0 55px; display: flex; }
.panel-inner {
  flex: 1;
  min-width: 0;
  padding: 25px 25px 0 24px;
  border-radius: 24px 24px 0 0;
  background: #dcdee5;
  overflow: hidden;
}
.setup-card {
  height: 1600px;
  border: 3px solid #d0d2dc;
  border-radius: 16px 16px 0 0;
  background: #f4f5f7;
}
.setup-head {
  height: 176px;
  padding: 22px 0 0 24px;
  display: flex;
  align-items: flex-start;
  background: #fff;
  border-radius: 14px 14px 0 0;
  border-bottom: 2px solid #e0e2e8;
}
.thumb {
  width: 158px;
  height: 127px;
  display: flex;
  align-items: center;
  justify-content: center;
  background: #dcdee5;
  border: 7px solid #c5c8d6;
  border-radius: 20px;
}
.setup-text { margin: 20px 0 0 33px; }
.setup-text h2 { font-size: 36px; font-weight: 600; line-height: 50px; letter-spacing: .8px; color: #4f5166; }
.setup-meta { margin-top: 4px; height: 36px; display: flex; align-items: center; gap: 14px; font-size: 24px; color: #8a8da2; }
.m-clock { margin-left: 7px; }
.setup-chev { margin: 16px 35px 0 auto; }

.setup-body { padding: 32px 19px 0 21px; }
.tool { display: flex; gap: 24px; margin-left: 14px; }
.tool-disc { width: 80px; height: 80px; border-radius: 50%; background: #4f5166; display: flex; align-items: center; justify-content: center; }
.tool-name { font-size: 28px; line-height: 40px; color: #4f5166; letter-spacing: .35px; }
.tool-specs { margin-top: 7px; display: flex; align-items: center; gap: 14px; font-size: 25px; color: #8a8da2; height: 34px; }
.spec-icon { margin-left: 10px; }
.spec-tool { margin-left: 14px; }
.spec-last { margin-left: 8px; }
.dotted { border-bottom: 2px dashed #7cadb2; line-height: 32px; }

.link { width: 8px; height: 25px; margin-left: 50px; background: #c5c8d6; }
.link-first { height: 32px; }
.link-open { height: 23px; }

.step {
  margin: 0 2px 0 3px;
  background: #fff;
  border: 3px solid #e0e2e8;
  border-radius: 18px;
  padding: 17px 0 14px 14px;
}
.step-head { display: flex; align-items: flex-start; }
.step-main { flex: 1; min-width: 0; }
.step-title { display: flex; align-items: center; gap: 16px; height: 36px; }
.pill {
  width: 101px;
  height: 36px;
  border-radius: 12px;
  background: #7cadb2;
  color: #e6f0f1;
  font-size: 24px;
  line-height: 36px;
  text-align: center;
  letter-spacing: 1px;
}
.pill b { font-weight: 400; color: #fff; }
.step-title strong { font-size: 28px; font-weight: 700; letter-spacing: -.1px; color: #4f5166; }
.step-meta { margin-top: 14px; height: 36px; display: flex; align-items: center; font-size: 24px; margin-left: 3px; color: #c5c8d6; }
.step-meta span { color: #8a8da2; margin-left: 11px; }
.step-meta .rpm { margin-right: 22px; }
.step-meta .ipm { margin: 0 20px 0 13px; }
.step-chev { margin: 24px 38px 0 0; color: #9a9db2; }

.step.is-open {
  margin: 0;
  padding: 0;
  border: 4px solid #7cadb2;
  border-radius: 20px;
  background: #f2f7f8;
  overflow: hidden;
}
.is-open .step-head {
  padding: 18px 0 15px 16px;
  background: #fff;
  border-bottom: 2px solid #e0e2e8;
}
.is-open .step-meta { margin-top: 16px; }
.props { padding: 6px 25px 7px 24px; }
.prop {
  height: 66px;
  display: flex;
  align-items: center;
  justify-content: space-between;
  border-bottom: 2px dashed #dfe1e6;
  font-size: 24px;
  letter-spacing: 1px;
}
.prop-last { border-bottom: 0; }
.prop dt { font-weight: 600; color: #24262f; }
.prop dd { color: #7e8196; letter-spacing: .8px; }
.prop u { text-underline-offset: 3px; }
.prop sup { font-size: 15px; line-height: 0; }
```
